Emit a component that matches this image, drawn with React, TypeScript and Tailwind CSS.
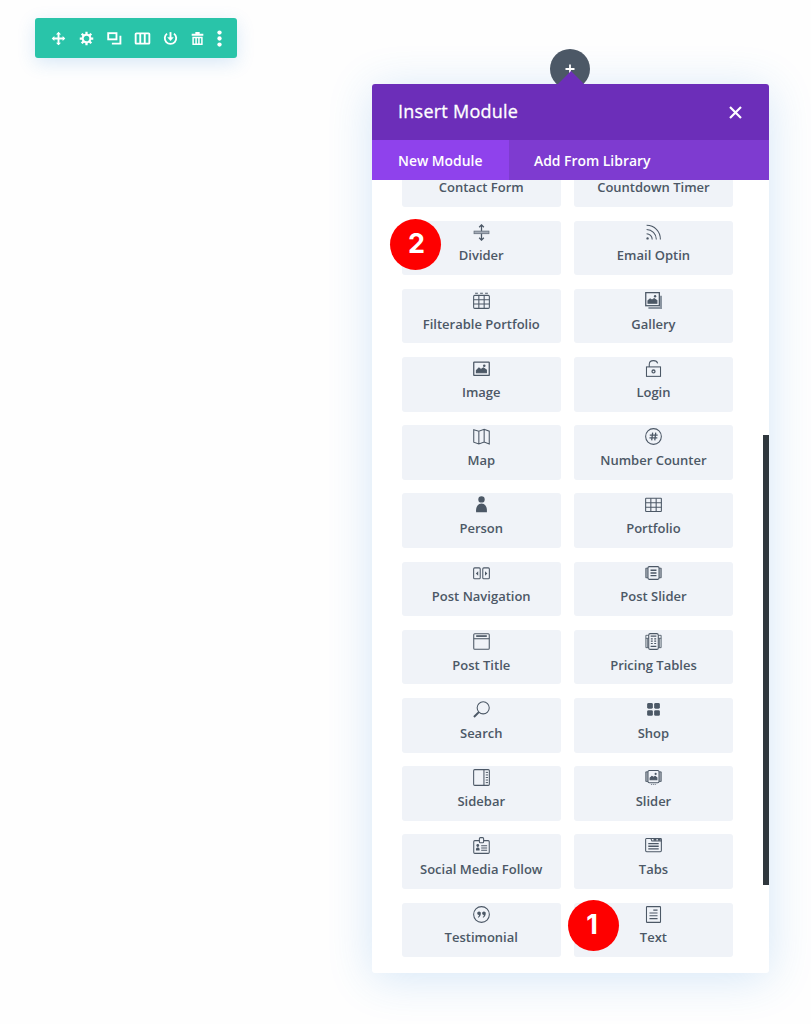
import React from 'react';
import { clsx } from 'clsx';

interface ModuleItem {
  name: string;
  icon?: React.ReactNode;
  badge?: string;
  badgeClass?: string;
}

const modules: ModuleItem[] = [
  { name: 'Contact Form' },
  { name: 'Countdown Timer' },
  {
    name: 'Divider',
    badge: '2',
    badgeClass: '-left-3 -top-[1.5px] pl-[2px]',
    icon: (
      <>
        <path d="M8 1v14M5.8 3 8 .8 10.2 3M5.8 13 8 15.2l2.2-2.2" strokeWidth="1.2" />
        <rect x="1" y="6.7" width="14" height="2.4" fill="#a3abb6" stroke="#6a7481" strokeWidth=".8" />
      </>
    ),
  },
  {
    name: 'Email Optin',
    icon: (
      <>
        <path d="M1.5 1.2c7.4 0 13 5.6 13 13.3M1.5 5.2c5 0 9.2 4.2 9.2 9.3M1.5 9.2c2.9 0 5.3 2.4 5.3 5.3" />
        <circle cx="2.4" cy="13.6" r="1.1" fill="currentColor" stroke="none" />
      </>
    ),
  },
  {
    name: 'Filterable Portfolio',
    icon: (
      <>
        <rect x=".6" y="3.2" width="14.8" height="12.2" rx="1" />
        <path d="M.6 7.3h14.8M.6 11.3h14.8M5.5 3.2v12.2M10.5 3.2v12.2M2 1.2h2.6M6.7 1.2h2.6M11.4 1.2H14" />
      </>
    ),
  },
  {
    name: 'Gallery',
    icon: (
      <>
        <path d="M15 3.5v11.6H3.2" strokeWidth="2" stroke="#8b95a1" />
        <rect x=".7" y=".6" width="12.8" height="12.3" fill="#f0f3f8" strokeWidth="1.2" />
        <path d="M2.8 10.5V8.3l2-1.8 1.8 1.3 2-1.5 2.6 1.8v2.4z" fill="currentColor" />
        <circle cx="9.5" cy="4" r="1.1" fill="currentColor" stroke="none" />
      </>
    ),
  },
  {
    name: 'Image',
    icon: (
      <>
        <rect x=".7" y="1.9" width="14.6" height="12.6" rx=".5" strokeWidth="1.2" />
        <path d="M3.2 12V9.8l2.4-2.3 2 1.5 2.2-1.5 2.8 2V12z" fill="currentColor" />
        <circle cx="10.6" cy="5.4" r="1.2" fill="currentColor" stroke="none" />
      </>
    ),
  },
  {
    name: 'Login',
    icon: (
      <>
        <rect x="1.4" y="6.5" width="13.2" height="8.9" />
        <path d="M4 6.5V4.2C4 2 5.7.6 8 .6c2 0 3.5 1 3.9 2.6" />
        <circle cx="8" cy="10.8" r="1.4" strokeWidth="1.2" />
      </>
    ),
  },
  {
    name: 'Map',
    icon: <path d="M.7 1.6 5.5 3l5-1.8L15.3 3v12l-4.8-1.8-5 1.9-4.8-1.7zM5.5 3v12M10.5 1.2v12" />,
  },
  {
    name: 'Number Counter',
    icon: (
      <>
        <circle cx="8" cy="8" r="7.4" />
        <path d="M7.2 4.4 6.3 11.6M10.1 4.4 9.2 11.6M4.5 6.6h7.4M4.2 9.3h7.4" strokeWidth="1.2" />
      </>
    ),
  },
  {
    name: 'Person',
    icon: (
      <g fill="currentColor" stroke="none">
        <circle cx="8" cy="3.2" r="3" />
        <path d="M2.9 15.3v-1.8C2.9 10 4.7 7 8 7s5.1 3 5.1 6.5v1.8z" />
      </g>
    ),
  },
  {
    name: 'Portfolio',
    icon: (
      <>
        <rect x=".6" y="2.2" width="14.8" height="12.4" rx=".5" />
        <path d="M.6 6.4h14.8M.6 10.5h14.8M5.5 2.2v12.4M10.5 2.2v12.4" />
      </>
    ),
  },
  {
    name: 'Post Navigation',
    icon: (
      <>
        <rect x=".6" y="2.7" width="6.2" height="10.3" rx="1" />
        <rect x="9.2" y="2.7" width="6.2" height="10.3" rx="1" />
        <path d="M4.9 5.8V10L2.7 7.9zM11.3 5.8V10l2.2-2.1z" fill="currentColor" stroke="none" />
      </>
    ),
  },
  {
    name: 'Post Slider',
    icon: (
      <>
        <rect x="2.8" y="1.5" width="10.4" height="12" rx="1.2" />
        <path d="M2.8 3H.7v9h2.1M13.2 3h2.1v9h-2.1M1.8 3v9M14.2 3v9" strokeWidth=".8" />
        <path d="M5.2 5h5.6M5.2 7.5h5.6M5.2 10h5.6" strokeWidth="1.3" />
      </>
    ),
  },
  {
    name: 'Post Title',
    icon: (
      <>
        <rect x=".7" y=".7" width="14.6" height="14.6" rx="1" />
        <path d="M.7 5.4h14.6" />
        <path d="M3 2.9h10" strokeWidth="1.6" />
      </>
    ),
  },
  {
    name: 'Pricing Tables',
    icon: (
      <>
        <rect x="3.5" y=".6" width="9" height="14.8" rx="1.4" />
        <path d="M3.5 2.2H.8v11.6h2.7M12.5 2.2h2.7v11.6h-2.7M.8 5h2.7M12.5 5h2.7M2.2 5v8.8M13.8 5v8.8" strokeWidth=".8" />
        <path d="M5.3 3h5.4M5.3 12.6h5.4" strokeWidth="1.2" />
        <path d="M5.5 5.5h1.8M8.7 5.5h1.8M5.5 7.7h1.8M8.7 7.7h1.8M5.5 9.9h1.8M8.7 9.9h1.8" strokeWidth="1.1" />
      </>
    ),
  },
  {
    name: 'Search',
    icon: (
      <>
        <circle cx="9.6" cy="6.4" r="5.7" />
        <path d="M5.5 10.5.9 15.1" strokeWidth="1.9" />
      </>
    ),
  },
  {
    name: 'Shop',
    icon: (
      <g fill="currentColor" stroke="none">
        <rect x="2" y="1.9" width="5.4" height="5.3" rx="1.3" />
        <rect x="8.6" y="1.9" width="5.4" height="5.3" rx="1.3" />
        <rect x="2" y="8.6" width="5.4" height="5.3" rx="1.3" />
        <rect x="8.6" y="8.6" width="5.4" height="5.3" rx="1.3" />
      </g>
    ),
  },
  {
    name: 'Sidebar',
    icon: (
      <>
        <rect x=".6" y=".6" width="14.8" height="14.8" rx="1" />
        <path d="M10.3.6v14.8" />
        <path d="M12 3.2h2.2M12 5.6h2.2M12 8h2.2M12 10.4h2.2M12 12.8h2.2" strokeWidth=".9" />
      </>
    ),
  },
  {
    name: 'Slider',
    icon: (
      <>
        <path d="M2.8 2.7H.7v9h2.1M13.2 2.7h2.1v9h-2.1M1.8 2.7v9M14.2 2.7v9" strokeWidth=".8" />
        <rect x="2.8" y="1.4" width="10.4" height="11.6" rx="1.2" />
        <path d="M4.8 10.2V8.5l1.7-1.6 1.6 1 1.4-1 1.7 1.4v1.9z" fill="currentColor" />
        <circle cx="10" cy="4.6" r="1" fill="currentColor" stroke="none" />
        <path d="M5.6 14.5h4.8" strokeWidth=".7" strokeDasharray="1.2 .8" />
      </>
    ),
  },
  {
    name: 'Social Media Follow',
    icon: (
      <>
        <path d="M6 3.4H1.7c-.6 0-1 .4-1 1v10c0 .6.4 1 1 1h12.6c.6 0 1-.4 1-1v-10c0-.6-.4-1-1-1H10" />
        <rect x="6" y=".6" width="4" height="4.8" rx="1" />
        <circle cx="4.5" cy="8" r="1.3" fill="currentColor" stroke="none" />
        <path d="M2.8 12.7v-1.3c0-.9.7-1.5 1.7-1.5s1.7.6 1.7 1.5v1.3z" fill="currentColor" stroke="none" />
        <path d="M7.7 8.2h5.6M7.7 10.3h5.6M7.7 12.4h5.6" />
      </>
    ),
  },
  {
    name: 'Tabs',
    icon: (
      <>
        <path d="M1.3 1.4h4.2l1 2.3h8.9v9.1c0 .6-.4 1-1 1H1.6c-.6 0-1-.4-1-1V2.4c0-.6.1-1 .7-1z" />
        <path d="M5.5 1.4h9.3c.4 0 .6.3.6.6v2" />
        <path d="M8 2.7h2.8M12 2.7h2.8" strokeWidth="1.5" />
        <path d="M3.1 6.2h9.8M3.1 8.7h9.8M3.1 11.2h9.8" strokeWidth="1.2" />
      </>
    ),
  },
  {
    name: 'Testimonial',
    icon: (
      <>
        <circle cx="8" cy="8" r="7.4" />
        <g fill="currentColor" stroke="none">
          <path d="M7.4 6.8c0 2-.9 3.6-2.5 4.3l-.4-.7c.7-.5 1.1-1.1 1.2-1.9-1 .1-1.7-.6-1.7-1.6s.7-1.7 1.7-1.7c1.1 0 1.7.7 1.7 1.6z" />
          <path d="M12 6.8c0 2-.9 3.6-2.5 4.3l-.4-.7c.7-.5 1.1-1.1 1.2-1.9-1 .1-1.7-.6-1.7-1.6s.7-1.7 1.7-1.7c1.1 0 1.7.7 1.7 1.6z" />
        </g>
      </>
    ),
  },
  {
    name: 'Text',
    badge: '1',
    badgeClass: '-left-[6px] -top-[3px] pr-[3px]',
    icon: (
      <>
        <rect x="1.4" y=".6" width="13.2" height="14.8" rx=".6" />
        <path d="M7.8 3.9h4M4.2 6.5h7.6M4.2 9.2h7.6M4.2 11.9h7.6" />
      </>
    ),
  },
];

// toolbar icons with the width each one takes in the bar
const actions = [
  {
    width: 'w-7',
    icon: (
      <>
        <path d="M8 2v12M2 8h12" />
        <path d="M8 .8 5.3 3.6h5.4zM8 15.2l-2.7-2.8h5.4zM.8 8l2.8-2.7v5.4zM15.2 8l-2.8-2.7v5.4z" fill="white" stroke="none" />
      </>
    ),
  },
  {
    width: 'w-7',
    icon: (
      <>
        <circle cx="8" cy="8" r="4.1" strokeWidth="2.2" />
        <path d="M8 .8v2.6M8 12.6v2.6M.8 8h2.6M12.6 8h2.6M2.9 2.9l1.8 1.8M11.3 11.3l1.8 1.8M13.1 2.9l-1.8 1.8M4.7 11.3l-1.8 1.8" strokeWidth="2.4" />
      </>
    ),
  },
  {
    width: 'w-7',
    icon: (
      <>
        <rect x="1.3" y="2.3" width="8.8" height="6.6" />
        <path d="M14.3 5v8.5H5.2" />
      </>
    ),
  },
  {
    width: 'w-7',
    icon: (
      <>
        <rect x=".7" y="2.5" width="14.6" height="11" rx=".8" />
        <path d="M5.6 2.5v11M10.4 2.5v11" />
      </>
    ),
  },
  {
    width: 'w-7',
    icon: (
      <>
        <path d="M4.3 2.8A6.1 6.1 0 1 0 11.7 2.8" />
        <path d="M8 1.2v7" />
        <path d="M5 6.8h6L8 10.5z" fill="white" strokeWidth=".5" />
      </>
    ),
  },
  {
    width: 'w-[27px]',
    icon: (
      <>
        <path d="M1.8 4h12.4M5.7 2.1h4.6" />
        <path d="M3.3 6.8h9.4v7.4H3.3zM6.5 7.5v6M9.5 7.5v6" strokeWidth="1.6" />
      </>
    ),
  },
  {
    width: 'w-4',
    icon: (
      <g fill="white" stroke="none">
        <circle cx="8" cy="1.7" r="2.3" />
        <circle cx="8" cy="8" r="2.3" />
        <circle cx="8" cy="14.5" r="2.3" />
      </g>
    ),
  },
];

function Toolbar() {
  return (
    <div className="mt-[18px] ml-[35px] flex h-10 w-[202px] shrink-0 items-center rounded-[3px] bg-[#29c4a9] pl-[9px] shadow-[0_5px_18px_rgba(43,135,218,0.18)]">
      {actions.map((action, i) => (
        <button key={i} className={clsx('flex h-full items-center justify-center', action.width)}>
          <svg viewBox="0 0 16 16" className="size-[15px] shrink-0 overflow-visible" fill="none" stroke="white" strokeWidth="2">
            {action.icon}
          </svg>
        </button>
      ))}
    </div>
  );
}

function ModuleCard({ name, icon, badge, badgeClass }: ModuleItem) {
  return (
    <li className="relative flex h-[54.5px] flex-col items-center rounded-[3px] bg-[#f0f3f8] pt-[3px] text-[#4c5866]">
      <svg viewBox="0 0 16 16" className="size-[17px] shrink-0" fill="none" stroke="currentColor" strokeWidth="1">
        {icon}
      </svg>
      <span className="mt-[5.7px] text-[13px] leading-[18px] font-semibold whitespace-nowrap">{name}</span>
      {badge && (
        <span
          className={clsx(
            'absolute flex size-[51px] items-center justify-center rounded-full bg-[#fe0000] font-[Inter,sans-serif] text-[27px] font-bold text-white',
            badgeClass
          )}
        >
          {badge}
        </span>
      )}
    </li>
  );
}

export default function App() {
  return (
    <div className="flex h-[1024px] w-[811px] items-start overflow-hidden bg-[#fefefe] font-['Open_Sans',sans-serif]">
      <Toolbar />

      <div className="relative mt-[84px] ml-[135px] w-[397px] shrink-0">
        <button className="absolute -top-[35px] left-[178px] z-10 flex h-[35px] w-10 items-start justify-center overflow-hidden">
          <span className="flex size-10 shrink-0 items-center justify-center rounded-full bg-[#4c5866]">
            <svg viewBox="0 0 10 10" className="size-[10px]" stroke="white" strokeWidth="1.8">
              <path d="M5 .5v9M.5 5h9" />
            </svg>
          </span>
        </button>
        <svg viewBox="0 0 28 14" className="absolute -top-[13px] left-[184.5px] z-10 h-[14px] w-[28px]">
          <path d="M14 0 28 14H0z" fill="#6c2eb9" />
        </svg>

        <div className="relative h-[889px] overflow-hidden rounded-[3px] bg-white shadow-[0_5px_45px_rgba(43,135,218,0.2)]">
          <header className="flex h-14 items-center justify-between bg-[#6c2eb9] pr-[27px] pb-px pl-[26px]">
            <h2 className="text-[18px] font-medium tracking-[0.25px] text-white [-webkit-text-stroke:0.3px_white]">
              Insert Module
            </h2>
            <svg viewBox="0 0 13 13" className="mt-px size-[13px]" stroke="white" strokeWidth="2.2">
              <path d="M1 1l11 11M12 1 1 12" />
            </svg>
          </header>

          <nav className="flex h-[40px] bg-[#7e3bd0] text-[13.9px] font-semibold text-white">
            <button className="h-full w-[136.5px] bg-[#8f42ec] pt-[2px] pl-[26px] text-left">New Module</button>
            <button className="h-full pt-[2px] pl-[25.5px] text-left">Add From Library</button>
          </nav>

          <div className="h-[793px] overflow-hidden">
            <ul className="-mt-[27.5px] grid grid-cols-[158.5px_158.5px] gap-[13.7px] pl-[30px]">
              {modules.map((item) => (
                <ModuleCard key={item.name} {...item} />
              ))}
            </ul>
          </div>

          <div className="absolute top-[351px] right-0 h-[450px] w-[6px] bg-[#2f373d]" />
        </div>
      </div>
    </div>
  );
}
